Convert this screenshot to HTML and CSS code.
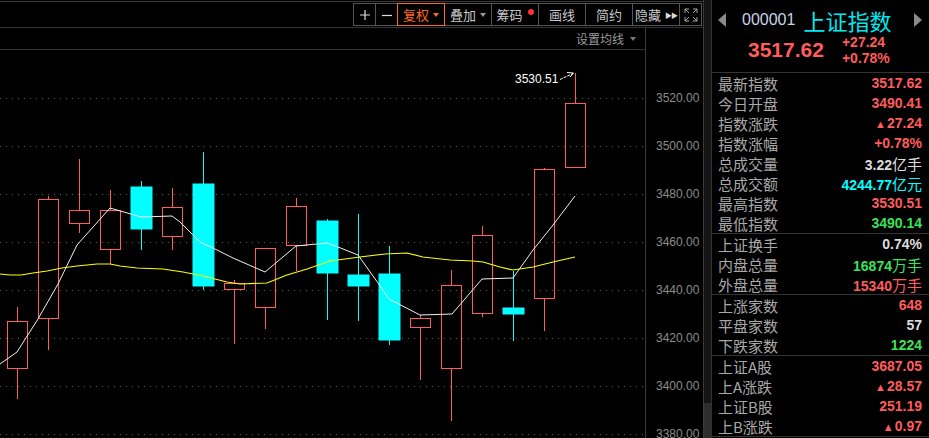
FILE: index.html
```html
<!DOCTYPE html>
<html lang="zh-CN">
<head>
    <meta charset="UTF-8">
    <meta name="viewport" content="width=device-width, initial-scale=1.0">
    <title>上证指数 K线</title>
    <link rel="stylesheet" href="styles.css">
</head>
<body>

    <!-- Chart side -->
    <div class="main">
        <div class="toolbar">
            <div class="tools">
                <span class="btn btn-icon">
                    <svg width="12" height="12" viewBox="0 0 12 12"><path d="M6 1V11M1 6H11" stroke="#ddd" stroke-width="1.2"/></svg>
                </span>
                <span class="btn btn-icon">
                    <svg width="12" height="12" viewBox="0 0 12 12"><path d="M1 6.5H11" stroke="#ddd" stroke-width="1.2"/></svg>
                </span>
                <span class="btn active">复权 <i class="caret"></i></span>
                <span class="btn">叠加 <i class="caret"></i></span>
                <span class="btn">筹码<i class="dot"></i></span>
                <span class="btn">画线</span>
                <span class="btn">简约</span>
                <span class="btn">隐藏 <i class="ff">▶▶</i></span>
                <span class="btn btn-icon">
                    <svg width="14" height="14" viewBox="0 0 14 14" fill="none" stroke="#aaa" stroke-width="1">
                        <path d="M1 5V1H5M1 1L5 5M9 1H13V5M13 1L9 5M1 9V13H5M1 13L5 9M13 9V13H9M13 13L9 9"/>
                    </svg>
                </span>
            </div>
        </div>

        <div class="chart">
            <div class="plot">
                <div class="plot-head">设置均线 <i class="caret"></i></div>
                <svg id="kline" width="645" height="388" viewBox="0 50 645 388">
                    <g id="grid"></g>
                    <g id="candles"></g>
                    <polyline class="ma10" points="0,274 10,275 21,275 33,273 47,271 62,268 77,266 97,264 110,264 120,266 137,268 163,269 183,272 203,276 227,282 240,284 267,283 287,275 307,269 330,261 360,257 385,254 407,253 423,257 450,260 473,261 483,262 500,267 513,270 533,267 553,262 575,257"/>
                    <polyline class="ma5" points="0,364 17,352 38,319 58,284 77,245 110,208 141,217 172,216 180,222 200,242 213,248 233,258 265,272 296,246 327,243 338,247 358,255 378,283 389,299 420,315 452,314 470,293 482,279 513,278 533,250 553,225 575,196"/>
                    <text x="515" y="83" class="max-label">3530.51</text>
                    <path d="M560 79.5 L573 73.5" class="max-arrow" stroke-dasharray="3 1"/>
                    <path d="M567 72.5 L573.5 73 L570 77" class="max-arrow"/>
                </svg>
            </div>
            <div class="axis">
                <span>3520.00</span>
                <span>3500.00</span>
                <span>3480.00</span>
                <span>3460.00</span>
                <span>3440.00</span>
                <span>3420.00</span>
                <span>3400.00</span>
                <span>3380.00</span>
            </div>
        </div>
    </div>

    <div class="scroll"><div class="scroll-thumb"></div></div>

    <!-- Quote panel -->
    <div class="panel">
        <div class="quote-head">
            <div class="quote-title">
                <i class="tri tri-left"></i>
                <span class="code">000001</span>
                <span class="name">上证指数</span>
                <i class="tri tri-right"></i>
            </div>
            <div class="quote-price">
                <span class="price">3517.62</span>
                <div class="change">
                    <span>+27.24</span>
                    <span>+0.78%</span>
                </div>
            </div>
        </div>

        <div class="group">
            <div class="row"><span>最新指数</span><b class="up">3517.62</b></div>
            <div class="row"><span>今日开盘</span><b class="up">3490.41</b></div>
            <div class="row"><span>指数涨跌</span><b class="up"><small>▲</small>27.24</b></div>
            <div class="row"><span>指数涨幅</span><b class="up">+0.78%</b></div>
            <div class="row"><span>总成交量</span><b class="flat">3.22<em>亿手</em></b></div>
            <div class="row"><span>总成交额</span><b class="cyan">4244.77<em>亿元</em></b></div>
            <div class="row"><span>最高指数</span><b class="up">3530.51</b></div>
            <div class="row"><span>最低指数</span><b class="down">3490.14</b></div>
        </div>
        <div class="group">
            <div class="row"><span>上证换手</span><b class="flat">0.74%</b></div>
            <div class="row"><span>内盘总量</span><b class="down">16874<em>万手</em></b></div>
            <div class="row"><span>外盘总量</span><b class="up">15340<em>万手</em></b></div>
        </div>
        <div class="group">
            <div class="row"><span>上涨家数</span><b class="up">648</b></div>
            <div class="row"><span>平盘家数</span><b class="flat">57</b></div>
            <div class="row"><span>下跌家数</span><b class="down">1224</b></div>
        </div>
        <div class="group">
            <div class="row"><span>上证A股</span><b class="up">3687.05</b></div>
            <div class="row"><span>上A涨跌</span><b class="up"><small>▲</small>28.57</b></div>
            <div class="row"><span>上证B股</span><b class="up">251.19</b></div>
            <div class="row"><span>上B涨跌</span><b class="up"><small>▲</small>0.97</b></div>
        </div>
    </div>

    <script>
        // candle data in screen y: [bodyTop, bodyBottom, high, low, rising]
        const candles = [
            [321, 369, 307, 399, 1],
            [199, 319, 196, 350, 1],
            [210, 224, 159, 233, 1],
            [210, 250, 190, 264, 1],
            [187, 229, 181, 250, 0],
            [207, 237, 188, 250, 1],
            [184, 286, 152, 290, 0],
            [283, 290, 280, 344, 1],
            [248, 308, 248, 329, 1],
            [206, 246, 198, 271, 1],
            [221, 273, 219, 320, 0],
            [275, 286, 214, 321, 0],
            [274, 340, 246, 345, 0],
            [318, 328, 315, 380, 1],
            [285, 369, 270, 421, 1],
            [235, 314, 226, 317, 1],
            [308, 314, 271, 341, 0],
            [169, 299, 168, 331, 1],
            [103, 168, 73, 168, 1]
        ];

        let grid = "";
        for (let y = 98; y <= 434; y += 48) {
            grid += `<line x1="0" x2="645" y1="${y + 0.5}" y2="${y + 0.5}"/>`;
        }
        document.getElementById("grid").innerHTML = grid;

        let html = "";
        candles.forEach((c, i) => {
            const [top, bot, high, low, rising] = c;
            const x = 17 + 31 * i;
            const cls = rising ? "rise" : "fall";
            if (rising) {
                html += `<line class="${cls}" x1="${x + 0.5}" x2="${x + 0.5}" y1="${high}" y2="${top}"/>`;
                html += `<line class="${cls}" x1="${x + 0.5}" x2="${x + 0.5}" y1="${bot}" y2="${low}"/>`;
                html += `<rect class="${cls}" x="${x - 9.5}" y="${top + 0.5}" width="20" height="${bot - top - 1}"/>`;
            } else {
                html += `<line class="${cls}" x1="${x + 0.5}" x2="${x + 0.5}" y1="${high}" y2="${low}"/>`;
                html += `<rect class="${cls}" x="${x - 10}" y="${top}" width="21" height="${bot - top}"/>`;
            }
        });
        document.getElementById("candles").innerHTML = html;
    </script>

</body>
</html>
```

FILE: styles.css
```css
* {
    box-sizing: border-box;
}
body {
    margin: 0;
    width: 929px;
    height: 438px;
    overflow: hidden;
    background: #000;
    display: flex;
    font-family: "Liberation Sans", "Noto Sans CJK SC", sans-serif;
    color: #aaa;
}
i, em, b {
    font-style: normal;
}

/* left: chart */
.main {
    width: 703px;
    display: flex;
    flex-direction: column;
}
.toolbar {
    flex: none;
    margin-top: 1px;
    height: 27px;
    border-top: 1px solid #3a3a3a;
    border-bottom: 1px solid #333;
    display: flex;
    justify-content: flex-end;
    padding: 1px 1px 0 0;
}
.tools {
    display: flex;
    height: 23px;
}
.btn {
    height: 23px;
    width: 48px;
    margin-left: -1px;
    border: 1px solid #555;
    display: flex;
    align-items: center;
    justify-content: center;
    gap: 4px;
    font: 13px "Noto Sans CJK SC", sans-serif;
    color: #c8c8c8;
    position: relative;
}
.btn-icon {
    width: 23px;
}
.btn.active {
    color: #ff6a1a;
    border-color: #ff6a1a;
    z-index: 1;
}
.caret {
    width: 0;
    height: 0;
    border-top: 4px solid #999;
    border-left: 3.5px solid transparent;
    border-right: 3.5px solid transparent;
}
.btn.active .caret {
    border-top-color: #ff6a1a;
}
.dot {
    width: 6px;
    height: 6px;
    border-radius: 50%;
    background: #ff3030;
    align-self: flex-start;
    margin-top: 5px;
    margin-left: 1px;
}
.ff {
    font-size: 7px;
    letter-spacing: -1px;
    color: #ddd;
}

.chart {
    flex: 1;
    min-height: 0;
    overflow: hidden;
    display: flex;
}
.plot {
    width: 646px;
    border-right: 1px solid #3a3a3a;
    display: flex;
    flex-direction: column;
}
.plot-head {
    flex: none;
    height: 22px;
    border-bottom: 1px solid #333;
    display: flex;
    justify-content: flex-end;
    align-items: center;
    gap: 6px;
    padding-right: 9px;
    font: 12px "Noto Sans CJK SC", sans-serif;
    color: #9a9a9a;
}
.plot-head .caret {
    border-top-color: #777;
}
#kline {
    display: block;
    flex: none;
}
#grid line {
    stroke: #5a5a5a;
    stroke-dasharray: 1 5;
}
.rise {
    stroke: #ff5c5c;
    fill: none;
    stroke-width: 1;
}
.fall {
    stroke: #00ffff;
    fill: #00ffff;
}
.ma5 {
    fill: none;
    stroke: #f0f0f0;
    stroke-width: 1;
}
.ma10 {
    fill: none;
    stroke: #ffff00;
    stroke-width: 1.2;
}
.max-label {
    font: 12px "Liberation Sans", sans-serif;
    fill: #fff;
}
.max-arrow {
    fill: none;
    stroke: #fff;
    stroke-width: 1;
}
.axis {
    flex: 1;
    padding: 46px 0 0 10px;
    display: flex;
    flex-direction: column;
}
.axis span {
    flex: none;
    height: 48px;
    font: 12px "Liberation Sans", sans-serif;
    line-height: 48px;
    color: #8c8c8c;
}

.scroll {
    width: 8px;
    border-left: 1px solid #3a3a3a;
    background: #141414;
    display: flex;
    flex-direction: column;
    justify-content: flex-end;
}
.scroll-thumb {
    height: 35px;
    background: #2e2e2e;
}

/* right: quote panel */
.panel {
    flex: 1;
    border-left: 1px solid #333;
    display: flex;
    flex-direction: column;
}
.quote-head {
    flex: none;
    height: 73px;
    border-bottom: 1px solid #333;
    padding: 6px 7px 0 6px;
}
.quote-title {
    height: 28px;
    display: flex;
    align-items: center;
}
.tri {
    width: 0;
    height: 0;
    border-top: 7px solid transparent;
    border-bottom: 7px solid transparent;
}
.tri-left {
    border-right: 8px solid #8a8a8a;
}
.tri-right {
    border-left: 8px solid #8a8a8a;
    margin-left: auto;
}
.code {
    margin-left: 16px;
    font-size: 16px;
    line-height: 18px;
    color: #c8d4e6;
}
.name {
    margin-left: 8px;
    font: 22px "Noto Sans CJK SC", sans-serif;
    line-height: 20px;
    color: #00e8f0;
}
.quote-price {
    height: 32px;
    display: flex;
    align-items: center;
    padding-left: 30px;
}
.price {
    font-size: 21px;
    font-weight: bold;
    color: #ff5c5c;
}
.change {
    margin-left: 18px;
    display: flex;
    flex-direction: column;
    font-size: 14px;
    font-weight: bold;
    line-height: 16px;
    color: #ff5c5c;
}

.group {
    flex: none;
    border-bottom: 1px solid #333;
}
.row {
    height: 20px;
    display: flex;
    align-items: center;
    justify-content: space-between;
    padding: 0 7px 0 6px;
}
.row span {
    font: 15px "Noto Sans CJK SC", sans-serif;
    color: #a8a8a8;
}
.row b {
    font-size: 14px;
    font-weight: bold;
}
.row em {
    font: 15px "Noto Sans CJK SC", sans-serif;
}
.row small {
    font-size: 11px;
    margin-right: 1px;
}
.up {
    color: #ff5c5c;
}
.down {
    color: #3ce05a;
}
.flat {
    color: #dcdcdc;
}
.cyan {
    color: #00ffff;
}
```
